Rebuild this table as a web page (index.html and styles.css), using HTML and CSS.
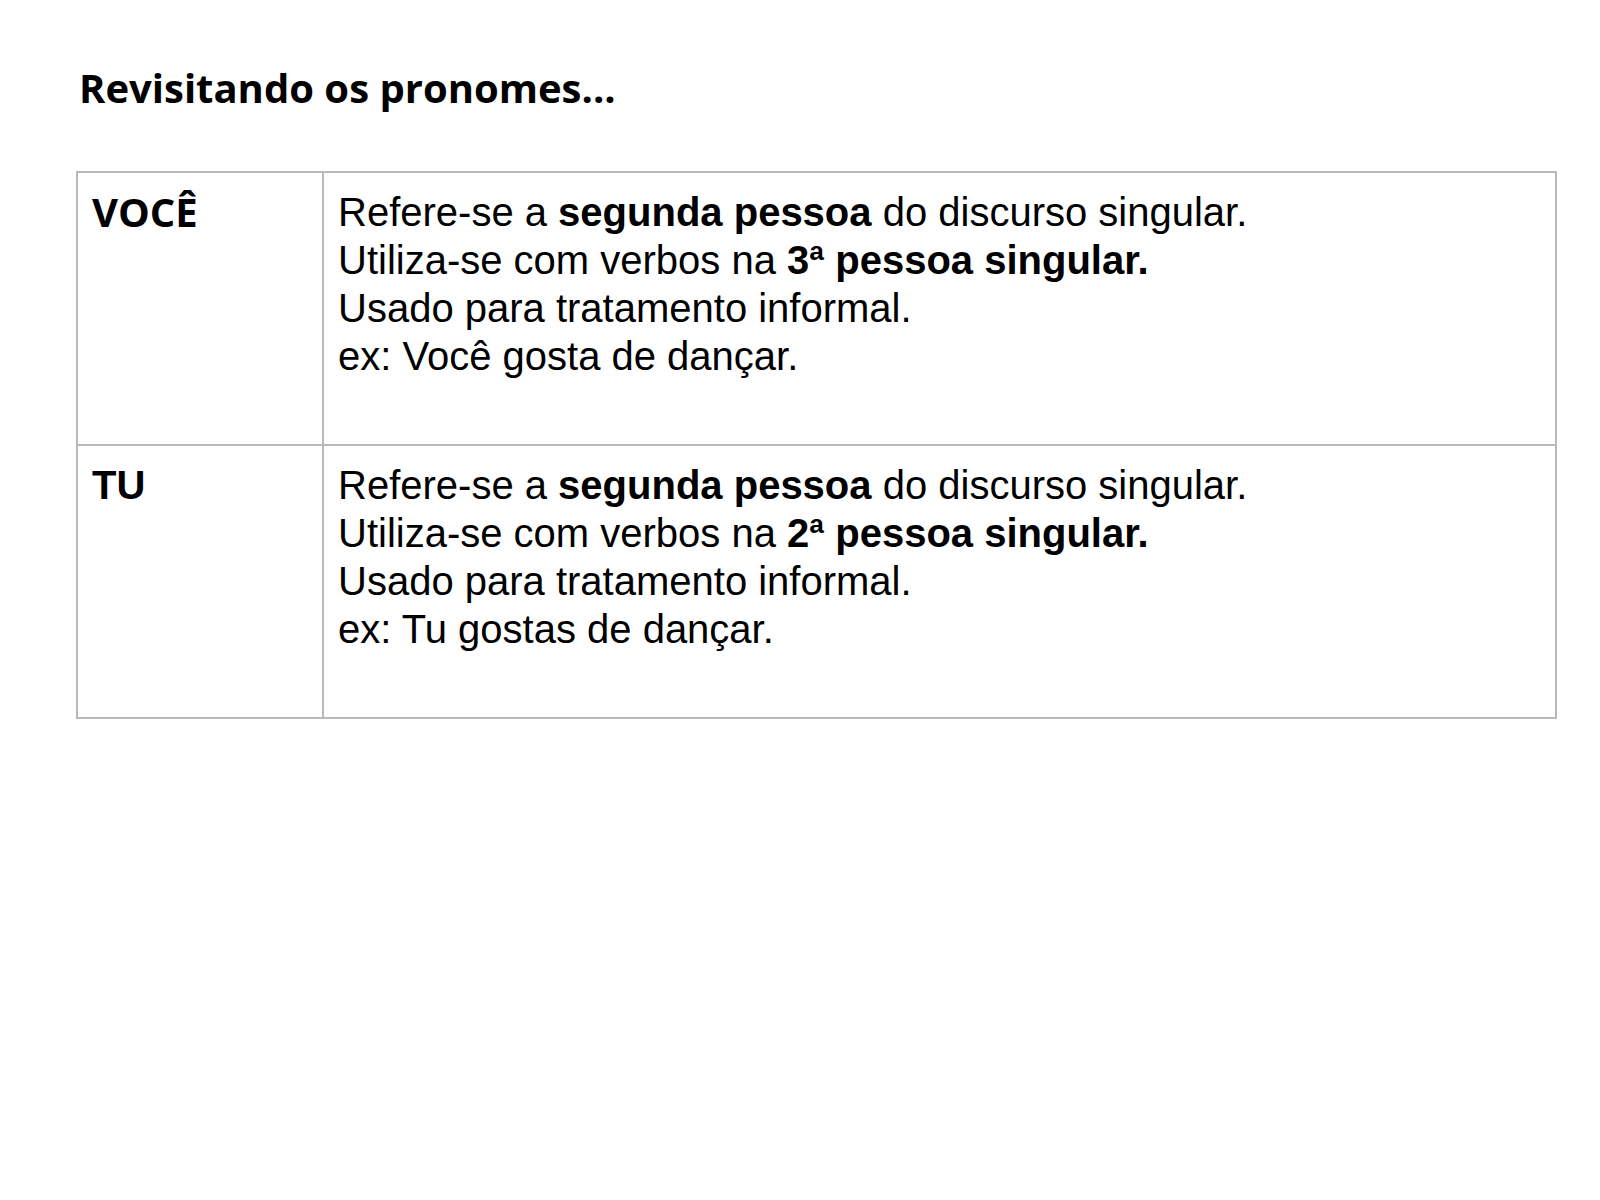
FILE: index.html
```html
<!DOCTYPE html>
<html lang="pt">
<head>
    <meta charset="UTF-8">
    <title>Revisitando os pronomes</title>
    <link rel="stylesheet" href="styles.css">
</head>
<body>
<div class="slide">
    <h1 class="slide-title">Revisitando os pronomes...</h1>

    <table class="pronouns">
        <tr>
            <td class="pronoun pronoun-sans">VOCÊ</td>
            <td class="usage">
                Refere-se a <b>segunda pessoa</b> do discurso singular.<br>
                Utiliza-se com verbos na <b>3ª pessoa singular.</b><br>
                Usado para tratamento informal.<br>
                ex: Você gosta de dançar.
            </td>
        </tr>
        <tr>
            <td class="pronoun pronoun-arial">TU</td>
            <td class="usage">
                Refere-se a <b>segunda pessoa</b> do discurso singular.<br>
                Utiliza-se com verbos na <b>2ª pessoa singular.</b><br>
                Usado para tratamento informal.<br>
                ex: Tu gostas de dançar.
            </td>
        </tr>
    </table>
</div>
</body>
</html>
```

FILE: styles.css
```css
body {
    background-color: #fff;
    margin: 0;
    padding: 0;
    color: #000;
}
.slide {
    padding: 62px 43px 0 76px;
}
.slide-title {
    margin: 0 0 57px 3px;
    font-family: "Open Sans", sans-serif;
    font-weight: 700;
    font-size: 40px;
    line-height: 52px;
}
.pronouns {
    border-collapse: collapse;
    width: 1481px;
}
.pronouns td {
    border: 2px solid #b9b9b9;
    vertical-align: top;
    height: 273px;
    box-sizing: border-box;
    padding: 15px 14px 11px;
}
.pronouns .pronoun {
    width: 246px;
    font-weight: 700;
    font-size: 40px;
    line-height: 48px;
}
.pronoun-sans {
    font-family: "Open Sans", sans-serif;
}
.pronoun-arial {
    font-family: "Liberation Sans", Arial, sans-serif;
}
.pronouns .usage {
    font-family: "Liberation Sans", Arial, sans-serif;
    font-size: 40px;
    line-height: 48px;
}
```
